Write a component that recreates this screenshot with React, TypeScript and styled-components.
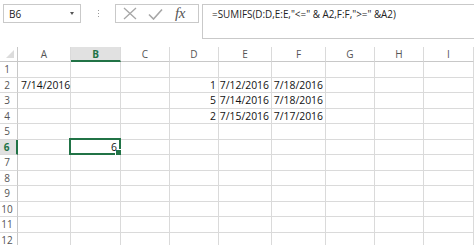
import React from "react";
import styled, { createGlobalStyle, css } from "styled-components";

const GREEN = "#217346";
const GRID = "#dadada";

const GlobalStyle = createGlobalStyle`
  html, body { margin: 0; padding: 0; background: #fff; }
  body { font-family: "Open Sans", "Noto Sans", sans-serif; overflow: hidden; }
  * { box-sizing: border-box; }
`;

const Page = styled.div`
  width: 474px;
  height: 245px;
  overflow: hidden;
  background: #fff;
`;

const Bar = styled.div`
  display: flex;
  align-items: flex-start;
  height: 47px;
  padding: 4px 0 0 3px;
`;

const NameBox = styled.div`
  width: 78px;
  height: 19px;
  border: 1px solid #c9c9c9;
  display: flex;
  align-items: center;
  justify-content: space-between;
  padding: 0 5px 0 5px;
  font-size: 10px;
  color: #222;
`;

const Caret = styled.span`
  width: 0;
  height: 0;
  border-left: 2.5px solid transparent;
  border-right: 2.5px solid transparent;
  border-top: 3px solid #555;
  margin-right: 1px;
`;

const Grip = styled.div`
  width: 12px;
  margin: 6px 11px 0 11px;
  display: flex;
  flex-direction: column;
  align-items: center;
  gap: 2px;
  & > span {
    width: 1px;
    height: 1px;
    background: #9a9a9a;
  }
`;

const FxBox = styled.div`
  width: 84px;
  height: 19px;
  border: 1px solid #c9c9c9;
  display: flex;
  align-items: center;
  padding: 0 0 0 7px;
  gap: 11px;
`;

const Fx = styled.span`
  font-family: "Liberation Serif", "DejaVu Serif", serif;
  font-style: italic;
  font-size: 15px;
  color: #555;
  margin-left: 1px;
  letter-spacing: -0.5px;
`;

const FormulaInput = styled.div`
  flex: 1;
  margin-left: 3px;
  height: 35px;
  border: 1px solid #c9c9c9;
  border-right: none;
  padding: 0 0 0 9px;
  font-size: 9.9px;
  line-height: 18px;
  color: #222;
  white-space: nowrap;
`;

const Sheet = styled.div`
  display: grid;
  grid-template-columns: 18px 53px 50px 49px 49px 53px 54px 49px 49px 50px;
  grid-template-rows: 15px repeat(12, 15.5px);
`;

const Corner = styled.div`
  position: relative;
  border-right: 1px solid #c8c8c8;
  border-bottom: 1px solid #c8c8c8;
  &::after {
    content: "";
    position: absolute;
    right: 3px;
    bottom: 3px;
    width: 0;
    height: 0;
    border-left: 8px solid transparent;
    border-bottom: 8px solid #dcdcdc;
  }
`;

const ColHead = styled.div<{ $active?: boolean }>`
  display: flex;
  align-items: center;
  justify-content: center;
  font-size: 10px;
  color: #555;
  border-right: 1px solid ${GRID};
  border-bottom: 1px solid #c8c8c8;
  ${(p) =>
    p.$active &&
    css`
      background: #e1e1e1;
      color: ${GREEN};
      font-weight: 700;
      border-bottom: 2px solid ${GREEN};
    `}
`;

const RowHead = styled.div<{ $active?: boolean }>`
  display: flex;
  align-items: center;
  justify-content: center;
  padding-right: 3px;
  font-size: 10px;
  color: #555;
  border-right: 1px solid #c8c8c8;
  border-bottom: 1px solid ${GRID};
  ${(p) =>
    p.$active &&
    css`
      background: #e1e1e1;
      color: ${GREEN};
      font-weight: 700;
      border-right: 2px solid ${GREEN};
    `}
`;

const Cell = styled.div<{ $align?: "left" | "right" }>`
  position: relative;
  display: flex;
  align-items: center;
  justify-content: ${(p) => (p.$align === "right" ? "flex-end" : "flex-start")};
  padding: 0 2px 0 3px;
  font-size: 10.4px;
  color: #111;
  white-space: nowrap;
  border-right: 1px solid ${GRID};
  border-bottom: 1px solid ${GRID};
`;

const Selection = styled.div`
  position: absolute;
  left: -2px;
  top: -2px;
  right: -1px;
  bottom: -1px;
  border: 2px solid ${GREEN};
  pointer-events: none;
  &::after {
    content: "";
    position: absolute;
    right: -3px;
    bottom: -3px;
    width: 5px;
    height: 5px;
    background: ${GREEN};
    border: 1px solid #fff;
  }
`;

const SelValue = styled.span`
  position: relative;
  z-index: 1;
  padding-right: 1px;
`;

const cols = ["A", "B", "C", "D", "E", "F", "G", "H", "I"];

type CellData = { v: string; align: "left" | "right" };
const data: Record<string, CellData> = {
  A2: { v: "7/14/2016", align: "left" },
  D2: { v: "1", align: "right" },
  E2: { v: "7/12/2016", align: "right" },
  F2: { v: "7/18/2016", align: "right" },
  D3: { v: "5", align: "right" },
  E3: { v: "7/14/2016", align: "right" },
  F3: { v: "7/18/2016", align: "right" },
  D4: { v: "2", align: "right" },
  E4: { v: "7/15/2016", align: "right" },
  F4: { v: "7/17/2016", align: "right" },
  B6: { v: "6", align: "right" },
};

const CancelIcon = () => (
  <svg width="14" height="13" viewBox="0 0 14 13">
    <path d="M1 1 L13 12 M13 1 L1 12" stroke="#a6a6a6" strokeWidth="1.3" fill="none" />
  </svg>
);

const CheckIcon = () => (
  <svg width="15" height="12" viewBox="0 0 15 12">
    <path d="M1 6.5 L5.5 11 L14 1.5" stroke="#a6a6a6" strokeWidth="1.6" fill="none" />
  </svg>
);

export default function App() {
  const rows = Array.from({ length: 12 }, (_, i) => i + 1);
  return (
    <Page>
      <GlobalStyle />
      <Bar>
        <NameBox>
          <span>B6</span>
          <Caret />
        </NameBox>
        <Grip>
          <span />
          <span />
          <span />
        </Grip>
        <FxBox>
          <CancelIcon />
          <CheckIcon />
          <Fx>fx</Fx>
        </FxBox>
        <FormulaInput>=SUMIFS(D:D,E:E,"&lt;=" &amp; A2,F:F,"&gt;=" &amp;A2)</FormulaInput>
      </Bar>
      <Sheet>
        <Corner />
        {cols.map((c) => (
          <ColHead key={c} $active={c === "B"}>
            {c}
          </ColHead>
        ))}
        {rows.map((r) => (
          <React.Fragment key={r}>
            <RowHead $active={r === 6}>{r}</RowHead>
            {cols.map((c) => {
              const id = `${c}${r}`;
              const d = data[id];
              const selected = id === "B6";
              return (
                <Cell key={id} $align={d?.align}>
                  {selected ? (
                    <>
                      <Selection />
                      <SelValue>{d?.v}</SelValue>
                    </>
                  ) : (
                    d?.v
                  )}
                </Cell>
              );
            })}
          </React.Fragment>
        ))}
      </Sheet>
    </Page>
  );
}
